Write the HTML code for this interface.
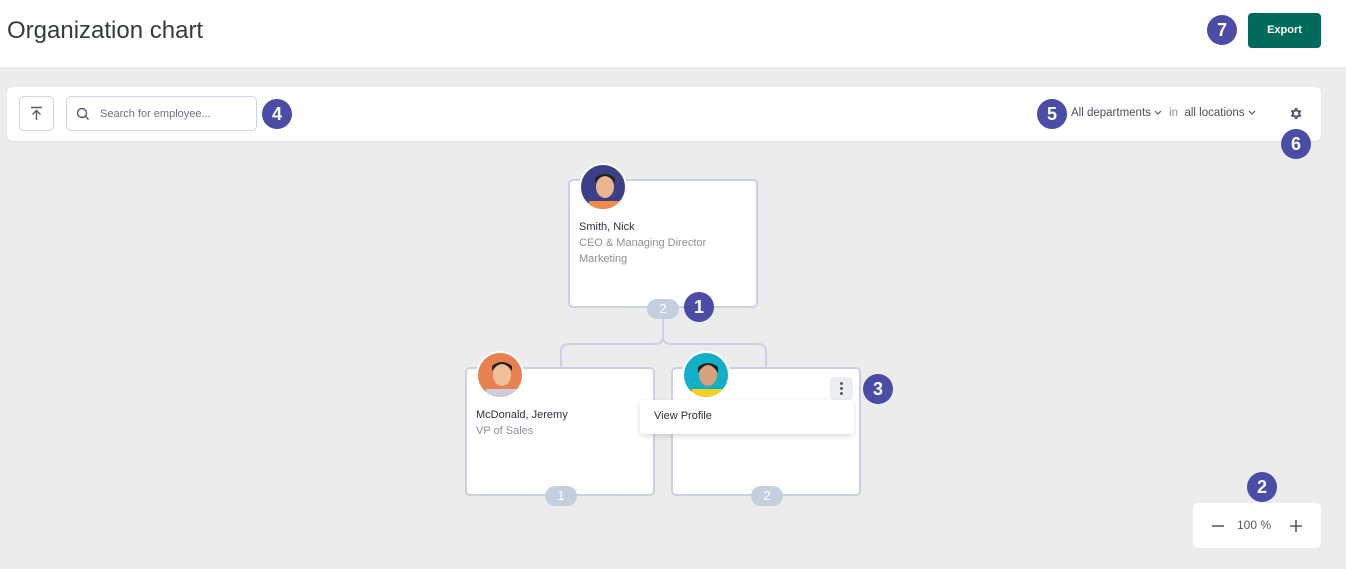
<!DOCTYPE html>
<html><head><style>
*{box-sizing:border-box;margin:0;padding:0}
body{width:1346px;height:569px;background:#ececec;font-family:"Liberation Sans",sans-serif;position:relative;overflow:hidden;color:#2b3340}
.hdr{position:absolute;left:0;top:0;width:1346px;height:67px;background:#fff}
.ttl{position:absolute;left:7px;top:17px;font-size:24px;color:#333a44}
.abs{position:absolute}
.badge{position:absolute;width:30px;height:30px;border-radius:50%;background:#4a4ca6;color:#fff;font-weight:bold;font-size:18px;text-align:center;line-height:31px}
.card{position:absolute;width:190px;height:129px;background:#fff;border:2px solid #c8d2e2;border-radius:5px}
.av{position:absolute;width:48px;height:48px;border-radius:50%;border:2px solid #fff;overflow:hidden}
.nm{position:absolute;font-size:11px;color:#2b3340}
.sub{position:absolute;font-size:11px;color:#8a919c;line-height:16px}
.pill{position:absolute;width:32px;height:20px;border-radius:10px;background:#c3cedf;color:#fff;font-size:13px;text-align:center;line-height:20px}
.chev{display:inline-block;vertical-align:middle;margin:0 4px 0 3px}
</style></head><body>
<div class="hdr"></div>
<div class="ttl">Organization chart</div>
<div class="abs" style="left:1248px;top:13px;width:73px;height:35px;background:#006b5a;border-radius:4px;color:#fff;font-size:11px;font-weight:bold;text-align:center;line-height:35px">Export</div>
<div class="badge" style="left:1207px;top:15px">7</div>

<div class="abs" style="left:7px;top:87px;width:1314px;height:54px;background:#fff;border-radius:6px;box-shadow:0 1px 2px rgba(0,0,0,.06)"></div>
<div class="abs" style="left:19px;top:96px;width:35px;height:35px;border:1px solid #cdd5e2;border-radius:5px">
<svg width="33" height="33" viewBox="0 0 33 33"><path d="M11 10.5h11M16.5 23V14M12.5 17.5l4-4 4 4" stroke="#555d69" stroke-width="1.4" fill="none"/></svg></div>
<div class="abs" style="left:66px;top:96px;width:191px;height:35px;border:1px solid #cdd5e2;border-radius:5px">
<svg class="abs" style="left:9px;top:10px" width="14" height="14" viewBox="0 0 14 14"><circle cx="6" cy="6" r="4.5" stroke="#555d69" stroke-width="1.4" fill="none"/><path d="M9.3 9.3l3.2 3.2" stroke="#555d69" stroke-width="1.4"/></svg>
<span class="abs" style="left:33px;top:11px;font-size:11px;color:#6b7280">Search for employee...</span></div>
<div class="badge" style="left:262px;top:99px">4</div>

<div class="badge" style="left:1037px;top:99px">5</div>
<div class="abs" style="left:1071px;top:107px;font-size:11.5px;color:#4b525d;white-space:nowrap">All departments<svg class="chev" width="8" height="6"><path d="M1 1l3 3 3-3" stroke="#555d69" stroke-width="1.2" fill="none"/></svg>&nbsp;<span style="color:#8a919c">in</span>&nbsp; all locations<svg class="chev" width="8" height="6"><path d="M1 1l3 3 3-3" stroke="#555d69" stroke-width="1.2" fill="none"/></svg></div>
<svg class="abs" style="left:1288px;top:106px" width="15" height="15" viewBox="0 0 24 24"><path fill="#555d69" d="M19.4 13a7.5 7.5 0 000-2l2.1-1.6-2-3.5-2.5 1a7.6 7.6 0 00-1.7-1L15 3h-4l-.4 2.7a7.6 7.6 0 00-1.7 1l-2.5-1-2 3.5L6.6 11a7.5 7.5 0 000 2l-2.1 1.6 2 3.5 2.5-1a7.6 7.6 0 001.7 1L11 21h4l.4-2.7a7.6 7.6 0 001.7-1l2.5 1 2-3.5zM13 15.5a3.5 3.5 0 110-7 3.5 3.5 0 010 7z"/></svg>
<div class="badge" style="left:1281px;top:129px">6</div>

<svg class="abs" style="left:0;top:0" width="1346" height="569"><path d="M663 318v18q0 8-8 8h-86q-8 0-8 8v16M663 318v18q0 8 8 8h87q8 0 8 8v16" stroke="#c8d2e2" stroke-width="2" fill="none"/></svg>

<div class="card" style="left:568px;top:179px"></div>
<div class="av" style="left:579px;top:163px;background:#3b3f86"><svg width="48" height="48"><rect x="8" y="36" width="32" height="14" fill="#f08a4b"/><ellipse cx="24" cy="22" rx="9" ry="11" fill="#e9b48f"/><path d="M14 18q10-14 20 0v-5q-10-8-20 0z" fill="#222"/></svg></div>
<div class="nm" style="left:579px;top:221px">Smith, Nick</div>
<div class="sub" style="left:579px;top:235px">CEO &amp; Managing Director<br>Marketing</div>
<div class="pill" style="left:647px;top:299px">2</div>
<div class="badge" style="left:684px;top:292px">1</div>

<div class="card" style="left:465px;top:367px"></div>
<div class="av" style="left:476px;top:351px;background:#e9804f"><svg width="48" height="48"><rect x="8" y="36" width="32" height="14" fill="#ccd"/><ellipse cx="24" cy="22" rx="9" ry="11" fill="#f0c09b"/><path d="M14 18q10-14 20 0v-5q-10-8-20 0z" fill="#222"/></svg></div>
<div class="nm" style="left:476px;top:409px">McDonald, Jeremy</div>
<div class="sub" style="left:476px;top:423px">VP of Sales</div>
<div class="pill" style="left:545px;top:486px">1</div>

<div class="card" style="left:671px;top:367px"></div>
<div class="av" style="left:682px;top:351px;background:#12b0c8"><svg width="48" height="48"><rect x="8" y="36" width="32" height="14" fill="#f5d020"/><ellipse cx="24" cy="22" rx="9" ry="11" fill="#d9a07c"/><path d="M14 20q10-16 20 0v-6q-10-8-20 0z" fill="#222"/></svg></div>
<div class="abs" style="left:830px;top:377px;width:23px;height:23px;background:#eceef1;border-radius:4px"><svg width="23" height="23"><circle cx="11.5" cy="6.5" r="1.5" fill="#555d69"/><circle cx="11.5" cy="11.5" r="1.5" fill="#555d69"/><circle cx="11.5" cy="16.5" r="1.5" fill="#555d69"/></svg></div>
<div class="badge" style="left:863px;top:374px">3</div>
<div class="abs" style="left:640px;top:400px;width:214px;height:34px;background:#fff;border-radius:4px;box-shadow:0 2px 6px rgba(0,0,0,.15);font-size:11px;color:#2b3340;padding:10px 14px">View Profile</div>
<div class="pill" style="left:751px;top:486px">2</div>

<div class="badge" style="left:1247px;top:472px">2</div>
<div class="abs" style="left:1193px;top:503px;width:128px;height:45px;background:#fff;border-radius:5px">
<svg class="abs" style="left:18px;top:16px" width="14" height="14"><path d="M1 7h12" stroke="#555d69" stroke-width="1.6"/></svg>
<span class="abs" style="left:44px;top:15px;font-size:12px;color:#555d69">100 %</span>
<svg class="abs" style="left:96px;top:16px" width="14" height="14"><path d="M1 7h12M7 1v12" stroke="#555d69" stroke-width="1.6"/></svg></div>
</body></html>
